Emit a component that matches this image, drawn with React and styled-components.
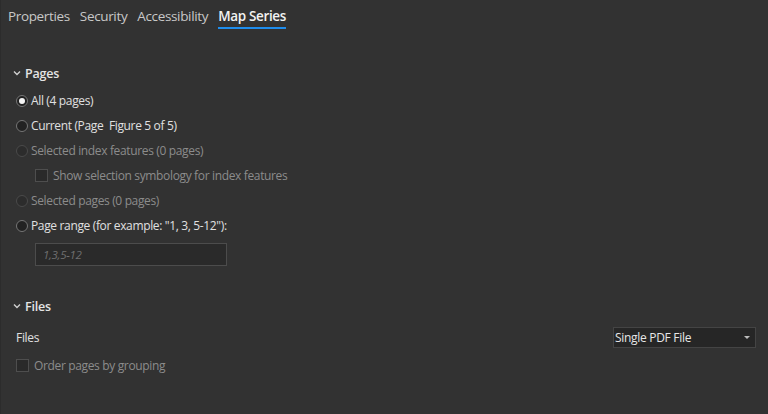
import React from 'react';
import styled, { createGlobalStyle } from 'styled-components';

const GlobalStyle = createGlobalStyle`
    html, body {
        margin: 0;
        padding: 0;
        background-color: #323232;
    }
    body {
        font-family: "Open Sans", "Noto Sans", sans-serif;
    }
`;

const Page = styled.div`
    width: 768px;
    height: 414px;
    background-color: #323232;
    color: #e2e2e2;
    box-sizing: border-box;
    overflow: hidden;
    border-left: 1px solid #2c2c2c;
`;

const TabBar = styled.div`
    display: flex;
    gap: 10px;
    padding: 5px 0 0 7px;
    height: 30px;
    box-sizing: border-box;
`;

const Tab = styled.div`
    font-size: 13.5px;
    letter-spacing: -0.35px;
    height: 24px;
    line-height: 23px;
    box-sizing: border-box;
    color: ${props => props.active ? '#f2f2f2' : '#c8c8c8'};
    font-weight: ${props => props.active ? 600 : 400};
    border-bottom: 2px solid ${props => props.active ? '#1f8ded' : 'transparent'};
`;

const Body = styled.div`
    padding: 34px 12px 0 12px;
`;

const SectionHeader = styled.div`
    display: flex;
    align-items: center;
    gap: 4px;
    height: 18px;
    font-size: 12.5px;
    font-weight: 600;
    letter-spacing: -0.2px;
    color: #e4e4e4;
`;

const Chevron = styled.svg`
    width: 8px;
    height: 8px;
    margin-top: -1px;
`;

const OptionList = styled.div`
    display: flex;
    flex-direction: column;
    padding: 6px 0 0 3px;
`;

const Option = styled.div`
    display: flex;
    align-items: center;
    gap: 3px;
    height: 25px;
    padding-left: ${props => props.indent ? '19px' : '0'};
    font-size: 12px;
    letter-spacing: -0.35px;
    color: ${props => props.disabled ? '#8c8c8c' : '#e0e0e0'};
`;

const Radio = styled.span`
    width: 12px;
    height: 12px;
    border-radius: 50%;
    box-sizing: border-box;
    border: 1px solid ${props => props.disabled ? '#4a4a4a' : '#767676'};
    background-color: ${props => props.disabled ? '#2c2c2c' : '#222222'};
    display: flex;
    align-items: center;
    justify-content: center;

    &::after {
        content: '';
        width: 6px;
        height: 6px;
        border-radius: 50%;
        background-color: ${props => props.checked ? '#f4f4f4' : 'transparent'};
    }
`;

const Checkbox = styled.span`
    width: 13px;
    height: 13px;
    box-sizing: border-box;
    border: 1px solid #4e4e4e;
    background-color: #2a2a2a;
    margin-right: 2px;
`;

const RangeInput = styled.div`
    margin: 5px 0 0 19px;
    width: 192px;
    height: 23px;
    box-sizing: border-box;
    border: 1px solid #4c4c4c;
    background-color: #2a2a2a;
    padding-left: 7px;
    font-size: 11.5px;
    font-style: italic;
    letter-spacing: -0.3px;
    line-height: 21px;
    color: #6f6f6f;
`;

const FilesSection = styled.div`
    padding-top: 31px;
`;

const FieldRow = styled.div`
    display: flex;
    align-items: center;
    justify-content: space-between;
    padding: 12px 0 0 3px;
    font-size: 12px;
    letter-spacing: -0.3px;
    color: #e0e0e0;
`;

const Select = styled.div`
    width: 143px;
    height: 21px;
    box-sizing: border-box;
    border: 1px solid #444444;
    background-color: #262626;
    display: flex;
    align-items: center;
    justify-content: space-between;
    padding: 0 5px 0 1px;
    font-size: 12px;
    color: #e6e6e6;
`;

const Caret = styled.span`
    width: 0;
    height: 0;
    border-left: 3px solid transparent;
    border-right: 3px solid transparent;
    border-top: 3px solid #bdbdbd;
`;

const CheckRow = styled(Option)`
    padding-left: 3px;
    margin-top: 5px;
    gap: 3px;
`;

const SectionTitle = ({ children }) => (
    <SectionHeader>
        <Chevron viewBox="0 0 8 8">
            <path d="M1 2.5 L4 5.5 L7 2.5" fill="none" stroke="#cfcfcf" strokeWidth="1.4" />
        </Chevron>
        {children}
    </SectionHeader>
);

const tabs = ['Properties', 'Security', 'Accessibility', 'Map Series'];

export default function App() {
    return (
        <Page>
            <GlobalStyle />
            <TabBar>
                {tabs.map(t => <Tab key={t} active={t === 'Map Series'}>{t}</Tab>)}
            </TabBar>
            <Body>
                <SectionTitle>Pages</SectionTitle>
                <OptionList>
                    <Option><Radio checked />All (4 pages)</Option>
                    <Option><Radio />Current (Page&nbsp; Figure 5 of 5)</Option>
                    <Option disabled><Radio disabled />Selected index features (0 pages)</Option>
                    <Option disabled indent><Checkbox />Show selection symbology for index features</Option>
                    <Option disabled><Radio disabled />Selected pages (0 pages)</Option>
                    <Option><Radio />Page range (for example: "1, 3, 5-12"):</Option>
                    <RangeInput>1,3,5-12</RangeInput>
                </OptionList>
                <FilesSection>
                    <SectionTitle>Files</SectionTitle>
                    <FieldRow>
                        Files
                        <Select>Single PDF File<Caret /></Select>
                    </FieldRow>
                    <CheckRow disabled><Checkbox />Order pages by grouping</CheckRow>
                </FilesSection>
            </Body>
        </Page>
    );
}
